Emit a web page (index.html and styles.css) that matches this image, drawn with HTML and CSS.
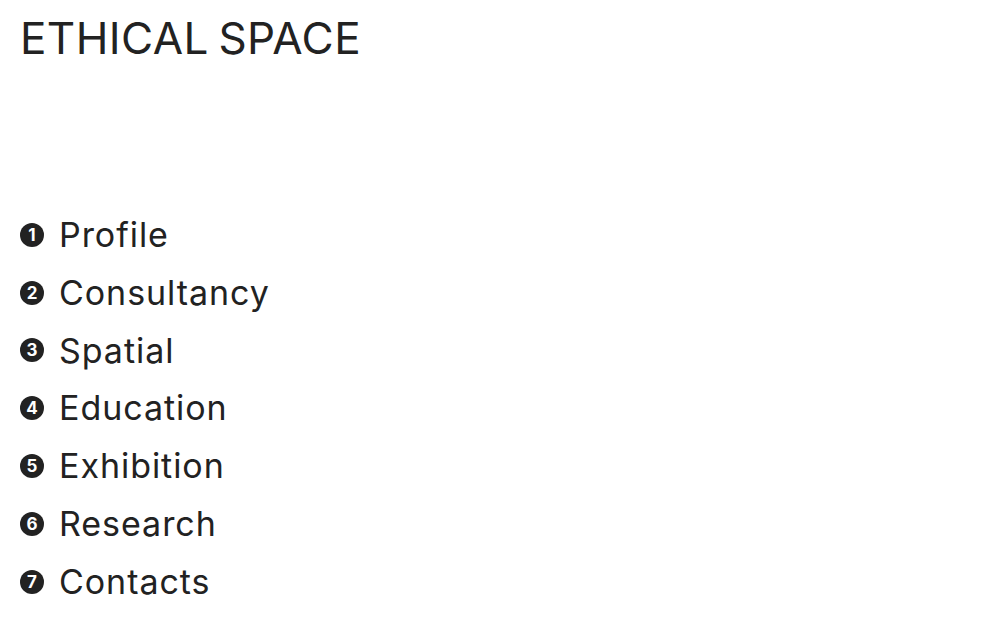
FILE: index.html
```html
<!DOCTYPE html>
<html lang="en">
<head>
<meta charset="utf-8">
<title>Ethical Space</title>
<link rel="stylesheet" href="styles.css">
</head>
<body>
<header class="site-header">
  <h1 class="brand">ETHICAL SPACE</h1>
</header>
<nav class="menu">
  <ul class="menu-list">
    <li class="menu-item"><span class="num">1</span><span class="label">Profile</span></li>
    <li class="menu-item"><span class="num">2</span><span class="label">Consultancy</span></li>
    <li class="menu-item"><span class="num">3</span><span class="label">Spatial</span></li>
    <li class="menu-item"><span class="num">4</span><span class="label">Education</span></li>
    <li class="menu-item"><span class="num">5</span><span class="label">Exhibition</span></li>
    <li class="menu-item"><span class="num">6</span><span class="label">Research</span></li>
    <li class="menu-item"><span class="num">7</span><span class="label">Contacts</span></li>
  </ul>
</nav>
</body>
</html>
```
FILE: styles.css
```css
html, body {
  margin: 0;
  padding: 0;
  background: #ffffff;
  color: #222222;
  font-family: "Inter", "Liberation Sans", Arial, sans-serif;
}

.site-header {
  padding: 16px 20px 0 20px;
}

.brand {
  margin: 0;
  font-size: 44px;
  line-height: 45px;
  font-weight: 400;
  letter-spacing: 0.4px;
  word-spacing: -3px;
}

.menu {
  padding: 145px 20px 0 20px;
}

.menu-list {
  list-style: none;
  margin: 0;
  padding: 0;
}

.menu-item {
  display: flex;
  align-items: center;
  gap: 15px;
  height: 57.8px;
  font-size: 34px;
  line-height: 57.8px;
  letter-spacing: 0.95px;
}

.num {
  flex: none;
  width: 24px;
  height: 24px;
  border-radius: 50%;
  background: #222222;
  color: #ffffff;
  font-size: 17px;
  font-weight: 700;
  line-height: 24px;
  letter-spacing: 0;
  text-align: center;
}
```
